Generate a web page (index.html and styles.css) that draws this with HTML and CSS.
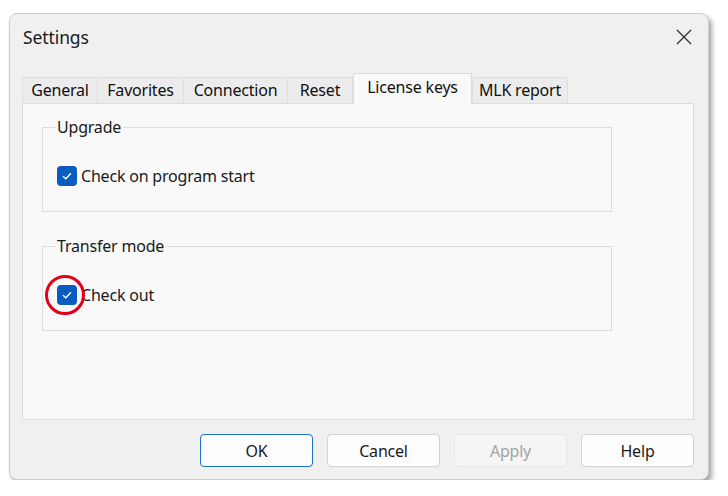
FILE: index.html
```html
<!DOCTYPE html>
<html>
<head>
<meta charset="utf-8">
<link rel="stylesheet" href="styles.css">
</head>
<body>
<div class="window">
  <div class="titlebar">
    <span class="title">Settings</span>
    <svg class="close" width="16" height="16" viewBox="0 0 16 16"><path d="M1 1L15 15M15 1L1 15" stroke="#333" stroke-width="1.4" fill="none"/></svg>
  </div>
  <div class="tabs">
    <div class="tab">General</div>
    <div class="tab">Favorites</div>
    <div class="tab">Connection</div>
    <div class="tab">Reset</div>
    <div class="tab active">License keys</div>
    <div class="tab">MLK report</div>
  </div>
  <div class="panel">
    <fieldset class="group">
      <legend>Upgrade</legend>
      <label class="check">
        <span class="box"><svg width="12" height="10" viewBox="0 0 12 10"><path d="M2 5.2L4.8 7.8L10 2.2" stroke="#fff" stroke-width="1.3" fill="none"/></svg></span>
        <span>Check on program start</span>
      </label>
    </fieldset>
    <fieldset class="group">
      <legend>Transfer mode</legend>
      <label class="check">
        <span class="box marked"><svg width="12" height="10" viewBox="0 0 12 10"><path d="M2 5.2L4.8 7.8L10 2.2" stroke="#fff" stroke-width="1.3" fill="none"/></svg><span class="ring"></span></span>
        <span>Check out</span>
      </label>
    </fieldset>
  </div>
  <div class="buttons">
    <button class="btn default">OK</button>
    <button class="btn">Cancel</button>
    <button class="btn disabled">Apply</button>
    <button class="btn">Help</button>
  </div>
</div>
</body>
</html>
```
FILE: styles.css
```css
html, body {
  margin: 0;
  padding: 0;
  background: #ffffff;
}
body {
  font-family: "Noto Sans", "Open Sans", sans-serif;
  color: #1a1a1a;
  padding: 13px 0 0 9px;
}
.window {
  box-sizing: border-box;
  width: 700px;
  height: 467px;
  background: #f0f0f0;
  border: 1px solid #cdcdcd;
  border-radius: 8px;
  box-shadow: 3px 4px 5px rgba(0,0,0,0.35);
  display: flex;
  flex-direction: column;
  padding: 0 14px 0 12px;
}
.titlebar {
  height: 46px;
  display: flex;
  align-items: center;
  justify-content: space-between;
  padding-left: 1px;
  padding-right: 2px;
}
.title {
  font-size: 17.5px;
  letter-spacing: -0.1px;
}
.close {
  display: block;
}
.tabs {
  margin-top: 13px;
  height: 30px;
  display: flex;
  align-items: flex-end;
  position: relative;
  z-index: 1;
}
.tab {
  box-sizing: border-box;
  height: 26px;
  padding: 0;
  white-space: nowrap;
  font-size: 16px;
  letter-spacing: -0.2px;
  line-height: 24px;
  background: #ececec;
  border: 1px solid #dedede;
  border-bottom: none;
  margin-right: -1px;
  color: #111;
  text-align: center;
}
.tab:nth-child(1) { width: 76px; }
.tab:nth-child(2) { width: 87px; }
.tab:nth-child(3) { width: 105px; }
.tab:nth-child(4) { width: 66px; }
.tab:nth-child(6) { width: 96px; }
.tab.active {
  width: 119px;
  height: 31px;
  margin-bottom: -1px;
  background: #f9f9f9;
  border-color: #dcdcdc;
  line-height: 27px;
  margin-left: 1px;
  margin-right: 0;
}
.panel {
  box-sizing: border-box;
  height: 317px;
  background: #f9f9f9;
  border: 1px solid #dcdcdc;
  padding: 14px 81px 0 19px;
  display: flex;
  flex-direction: column;
  gap: 25px;
}
.group {
  box-sizing: border-box;
  height: 94px;
  margin: 0;
  border: 1px solid #dcdcdc;
  padding: 29px 14px 0 14px;
  min-width: 0;
}
.group legend {
  font-size: 16px;
  letter-spacing: -0.2px;
  padding: 0 2px;
  margin-left: -2px;
  line-height: 18px;
}
.check {
  display: flex;
  align-items: center;
  gap: 4px;
  font-size: 16px;
  letter-spacing: -0.2px;
}
.box {
  position: relative;
  width: 20px;
  height: 20px;
  border-radius: 4px;
  background: #0b5cc0;
  display: flex;
  align-items: center;
  justify-content: center;
}
.box svg {
  display: block;
}
.ring {
  position: absolute;
  left: -12px;
  top: -10px;
  width: 34px;
  height: 34px;
  border: 3px solid #e3001b;
  border-radius: 50%;
}
.buttons {
  display: flex;
  justify-content: flex-end;
  gap: 14px;
  margin-top: 14px;
  padding-right: 0;
}
.btn {
  box-sizing: border-box;
  width: 113px;
  height: 33px;
  font-family: "Noto Sans", "Open Sans", sans-serif;
  font-size: 16px;
  letter-spacing: -0.2px;
  color: #1a1a1a;
  background: #fdfdfd;
  border: 1px solid #d2d2d2;
  border-radius: 4px;
  padding: 0;
}
.btn.default {
  border: 1.5px solid #1a6fc9;
}
.btn.disabled {
  background: #f5f5f5;
  border-color: #e6e6e6;
  color: #a3a3a3;
}
```
